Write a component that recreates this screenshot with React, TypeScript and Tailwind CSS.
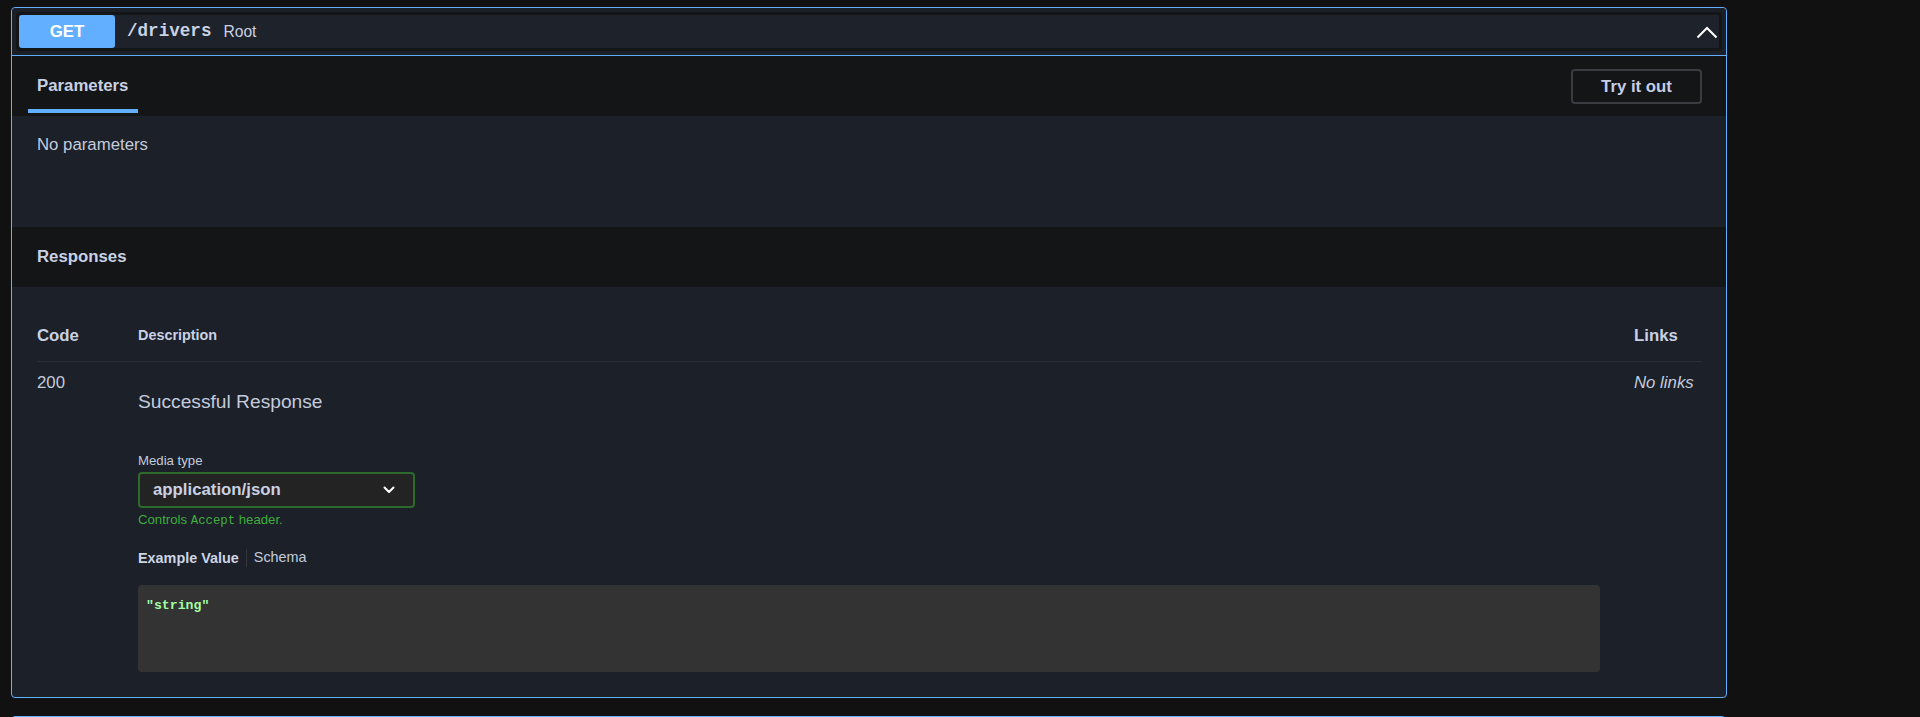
import React from 'react'

const sans = { fontFamily: '"Liberation Sans", Arial, sans-serif' }

function ChevronUp() {
  return (
    <svg width="22" height="14" viewBox="0 0 22 14" fill="none">
      <path d="M1.5 12.5 L11 3 L20.5 12.5" stroke="#ffffff" strokeWidth="2" />
    </svg>
  )
}

function ChevronDown() {
  return (
    <svg width="12" height="8" viewBox="0 0 12 8" fill="none">
      <path d="M1.5 1.5 L6 6 L10.5 1.5" stroke="#ffffff" strokeWidth="2" strokeLinecap="round" strokeLinejoin="round" />
    </svg>
  )
}

export default function App() {
  return (
    <div className="min-h-screen bg-[#111111] pt-[7px] pl-[11px]" style={sans}>
      <div className="w-[1716px] border border-[#61affe] rounded-[4px] bg-[#1b2029]">
        {/* summary */}
        <div className="p-[4px] border-b border-[#61affe] bg-[#1b1f27] rounded-t-[4px]">
          <div className="h-[39px] border-[3px] border-[#131518] rounded-[4px] bg-[#1e222a] flex items-center">
            <div className="w-[96px] h-full bg-[#61affe] rounded-[3px] flex items-center justify-center text-white font-bold text-[16.8px]">
              GET
            </div>
            <span className="ml-[12px] font-bold text-[17.6px] text-[#c9d1e3]" style={{ fontFamily: '"Liberation Mono", monospace' }}>
              /drivers
            </span>
            <span className="ml-[12px] text-[15.6px] text-[#c9d1e3]">Root</span>
            <div className="ml-auto flex items-center pr-[1px]">
              <ChevronUp />
            </div>
          </div>
        </div>

        {/* tab header */}
        <div className="h-[60px] bg-[#141517] flex items-end justify-between pl-[16px] pr-[24px]">
          <div className="mb-[3px] pl-[9px] pr-[10px] pb-[13px] border-b-[4px] border-[#61affe] text-[16.8px] leading-[20px] font-bold text-[#c9d1e3]">
            Parameters
          </div>
          <button className="self-center mt-[1px] w-[131px] h-[35px] border-2 border-[#3a3c41] rounded-[4px] text-[16.8px] font-bold text-[#c6cde6] flex items-center justify-center">
            Try it out
          </button>
        </div>

        {/* parameters body */}
        <div className="h-[111px] pl-[25px] pt-[19px] text-[16.8px] leading-[20px] text-[#c3cbdc]">No parameters</div>

        {/* responses header */}
        <div className="h-[60px] bg-[#141517] flex items-center pl-[25px] text-[16.8px] font-bold text-[#c9d1e3]">
          Responses
        </div>

        {/* responses body */}
        <div className="pl-[25px] pr-[24px] pt-[23px] pb-[25px]">
          <div className="grid grid-cols-[101px_1fr_68px] h-[52px] items-center border-b border-[#2a2e36] text-[#c9d1e3] font-bold">
            <div className="text-[16.8px]">Code</div>
            <div className="text-[14.4px]">Description</div>
            <div className="text-[16.8px]">Links</div>
          </div>
          <div className="grid grid-cols-[101px_1fr_68px]">
            <div className="pt-[11px] text-[16.8px] leading-[20px] text-[#c3cbdc]">200</div>
            <div className="pr-[34px]">
              <div className="pt-[29px] text-[19.2px] leading-[22px] text-[#c3cbdc]">Successful Response</div>
              <div className="mt-[40px] text-[13.2px] leading-[16px] text-[#c3cbdc]">Media type</div>
              <div className="mt-[3px] w-[277px] h-[36px] border-2 border-[#2d6a2d] rounded-[4px] bg-[#232323] flex items-center pl-[13px] pr-[18px]">
                <span className="text-[16.8px] font-bold text-[#c9d1e3]">application/json</span>
                <span className="ml-auto flex"><ChevronDown /></span>
              </div>
              <div className="mt-[4px] text-[13.2px] leading-[16px] text-[#41ad3c]">
                Controls <span className="text-[12.3px]" style={{ fontFamily: '"Liberation Mono", monospace' }}>Accept</span> header.
              </div>
              <div className="mt-[20px] h-[18px] flex items-center text-[14.4px]">
                <span className="font-bold text-[#cdd4e4] pr-[7px] border-r border-[#33363c] leading-[18px]">Example Value</span>
                <span className="pl-[7px] text-[#c3cbdc]">Schema</span>
              </div>
              <div className="mt-[18px] h-[87px] rounded-[4px] bg-[#333333] pl-[8px] pt-[7px]">
                <span className="font-bold text-[13.2px] text-[#a2fca2]" style={{ fontFamily: '"Liberation Mono", monospace' }}>
                  "string"
                </span>
              </div>
            </div>
            <div className="pt-[11px] text-[16.8px] leading-[20px] italic text-[#c3cbdc]">No links</div>
          </div>
        </div>
      </div>

      {/* next block edge */}
      <div className="mt-[18px] w-[1715px] h-[40px] border border-[#61affe] rounded-[4px] bg-[#1b2029]" />
    </div>
  )
}
